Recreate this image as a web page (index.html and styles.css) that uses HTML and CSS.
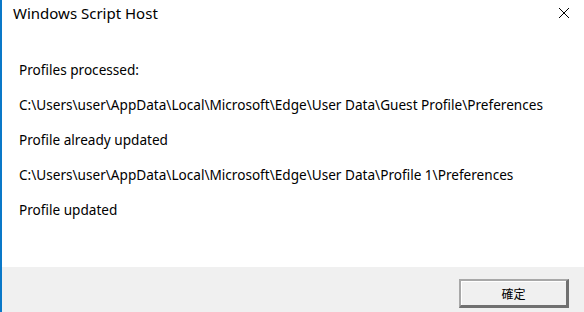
FILE: index.html
```html
<!DOCTYPE html>
<html lang="zh-Hant">

<head>
    <meta charset="UTF-8">
    <meta name="viewport" content="width=device-width, initial-scale=1.0">
    <title>Windows Script Host</title>
    <link rel="stylesheet" href="styles.css">
</head>

<body>
    <div class="window">
        <div class="titlebar">
            <span class="title">Windows Script Host</span>
            <span class="close">
                <svg width="12" height="12" viewBox="0 0 12 12">
                    <path d="M1 1 L11 11 M11 1 L1 11" stroke="#000" stroke-width="1" fill="none" />
                </svg>
            </span>
        </div>
        <div class="content">
            <div class="line">Profiles processed:</div>
            <div class="line">C:\Users\user\AppData\Local\Microsoft\Edge\User Data\Guest Profile\Preferences</div>
            <div class="line">Profile already updated</div>
            <div class="line">C:\Users\user\AppData\Local\Microsoft\Edge\User Data\Profile 1\Preferences</div>
            <div class="line">Profile updated</div>
        </div>
        <div class="footer">
            <button class="ok">確定</button>
        </div>
    </div>
</body>

</html>
```

FILE: styles.css
```css
body {
    margin: 0;
    padding: 0;
    background-color: #ffffff;
    font-family: "Noto Sans", "Noto Sans CJK TC", sans-serif;
}

.window {
    display: flex;
    flex-direction: column;
    height: 312px;
    border-left: 2px solid #0a78c8;
    box-sizing: border-box;
}

.titlebar {
    display: flex;
    justify-content: space-between;
    align-items: center;
    height: 26px;
    padding: 0 14px 0 11px;
}

.title {
    font-size: 15px;
    color: #000;
}

.close {
    display: flex;
}

.content {
    flex: 1;
    padding: 26px 0 0 17px;
    background-color: #fff;
}

.line {
    font-size: 13.6px;
    line-height: 35px;
    color: #000;
    white-space: nowrap;
}

.footer {
    display: flex;
    justify-content: flex-end;
    align-items: flex-start;
    height: 45px;
    padding: 12px 15px 0 0;
    box-sizing: border-box;
    background-color: #f0f0f0;
}

.ok {
    width: 110px;
    height: 29px;
    font-family: "Noto Sans CJK TC", sans-serif;
    font-size: 12px;
    color: #000;
    background-color: #f0f0f0;
    border-top: 2px solid #a8a8a8;
    border-left: 2px solid #a8a8a8;
    border-right: 3px solid #707070;
    border-bottom: 3px solid #707070;
    box-shadow: inset 1px 1px 0 #ffffff;
    padding: 0;
}
```
